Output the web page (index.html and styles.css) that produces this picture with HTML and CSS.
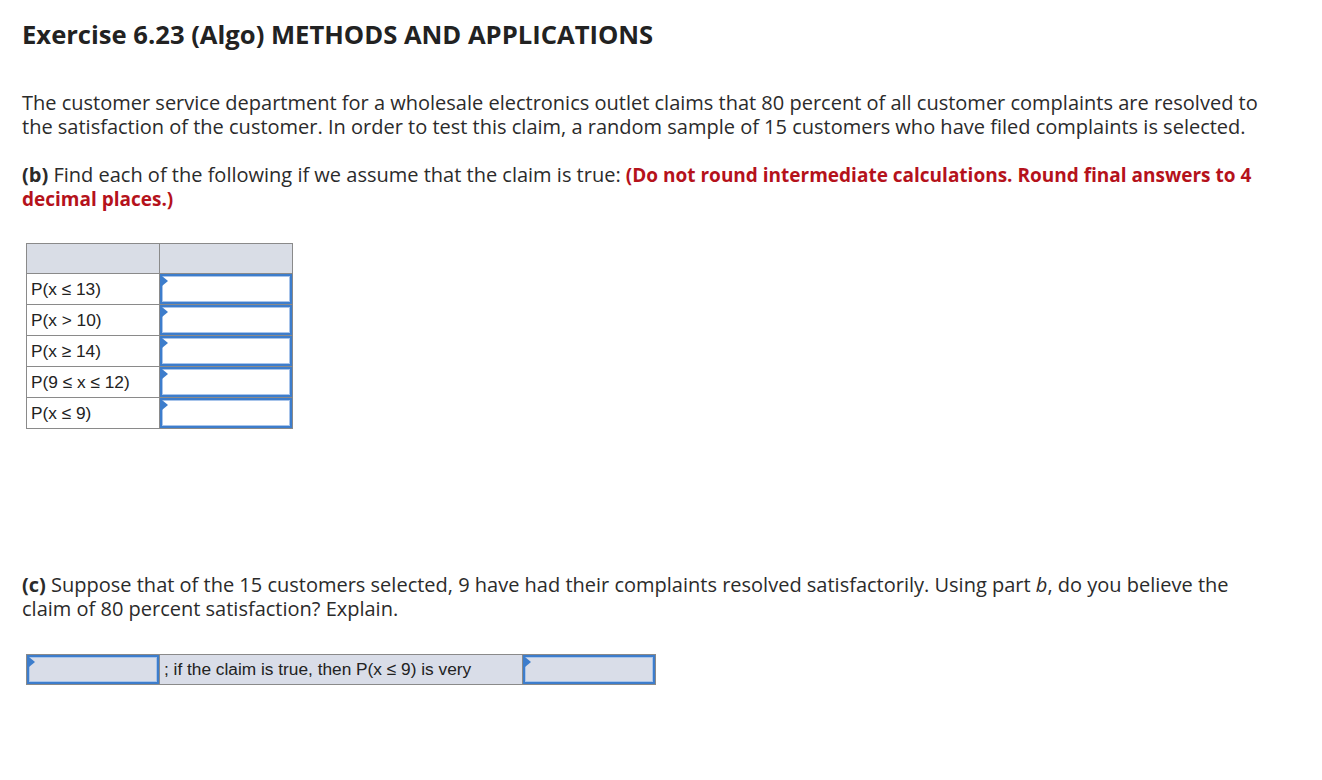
FILE: index.html
```html
<!DOCTYPE html>
<html lang="en">
<head>
<meta charset="UTF-8" />
<title>Exercise 6.23 (Algo) METHODS AND APPLICATIONS</title>
<link rel="stylesheet" href="styles.css">
</head>
<body>
  <div class="question">
    <h1 class="title">Exercise 6.23 (Algo) METHODS AND APPLICATIONS</h1>

    <p class="para intro">The customer service department for a wholesale electronics outlet claims that 80 percent of all customer complaints are resolved to the satisfaction of the customer. In order to test this claim, a random sample of 15 customers who have filed complaints is selected.</p>

    <p class="para"><b>(b)</b> Find each of the following if we assume that the claim is true: <b class="warn">(Do not round intermediate calculations. Round final answers to 4 decimal places.)</b></p>

    <table class="answers">
      <tr class="head"><td></td><td></td></tr>
      <tr><td class="label">P(x &le; 13)</td><td class="entry"><span class="flag"></span></td></tr>
      <tr><td class="label">P(x &gt; 10)</td><td class="entry"><span class="flag"></span></td></tr>
      <tr><td class="label">P(x &ge; 14)</td><td class="entry"><span class="flag"></span></td></tr>
      <tr><td class="label">P(9 &le; x &le; 12)</td><td class="entry"><span class="flag"></span></td></tr>
      <tr><td class="label">P(x &le; 9)</td><td class="entry"><span class="flag"></span></td></tr>
    </table>

    <p class="para part-c"><b>(c)</b> Suppose that of the 15 customers selected, 9 have had their complaints resolved satisfactorily. Using part <i>b</i>, do you believe the claim of 80 percent satisfaction? Explain.</p>

    <table class="explain">
      <tr>
        <td class="entry pick"><span class="flag"></span></td>
        <td class="text">; if the claim is true, then P(x &le; 9) is very</td>
        <td class="entry pick"><span class="flag"></span></td>
      </tr>
    </table>
  </div>
</body>
</html>
```

FILE: styles.css
```css
* {
  box-sizing: border-box;
}
body {
  margin: 0;
  background: #fff;
  color: #2b2b2b;
  font-family: "Open Sans", "Noto Sans", sans-serif;
}
.question {
  padding: 20px 50px 20px 22px;
}
.title {
  margin: 0 0 41px;
  font-size: 25.6px;
  font-weight: 700;
  line-height: 30px;
  color: #222;
}
.para {
  margin: 0 0 24px;
  font-size: 20px;
  line-height: 24px;
}
.warn {
  color: #b5121b;
  font-size: 19px;
}
.part-c {
  margin-top: 144px;
}
table {
  border-collapse: collapse;
  margin-left: 4px;
  font-family: "Liberation Sans", Arial, sans-serif;
  font-size: 17.3px;
  color: #222;
}
.answers {
  margin-top: 32px;
}
.answers td {
  width: 133px;
  height: 31px;
  border: 1px solid #8a8a8a;
  padding: 0 4px;
}
.answers .head td {
  height: 30px;
  background: #d9dde6;
}
.entry {
  position: relative;
  box-shadow: inset 0 0 0 2px #3d7dcc;
}
.entry::after {
  content: "";
  position: absolute;
  inset: 2px;
  border: 1px solid #a8c4ea;
}
.answers tr:nth-child(n+3) .entry {
  box-shadow: inset 0 0 0 2px #3d7dcc, inset 0 3px 0 0 #3d7dcc;
}
.flag {
  position: absolute;
  left: 2px;
  top: 2px;
  width: 0;
  height: 0;
  border-top: 5px solid transparent;
  border-bottom: 5px solid transparent;
  border-left: 6px solid #3d7dcc;
  z-index: 1;
}
.explain {
  margin-top: 33px;
}
.explain td {
  height: 30px;
  border: 1px solid #8a8a8a;
  background: #d9dde8;
  padding: 0 4px;
}
.explain .pick {
  width: 133px;
}
.explain .text {
  width: 363px;
}
```
